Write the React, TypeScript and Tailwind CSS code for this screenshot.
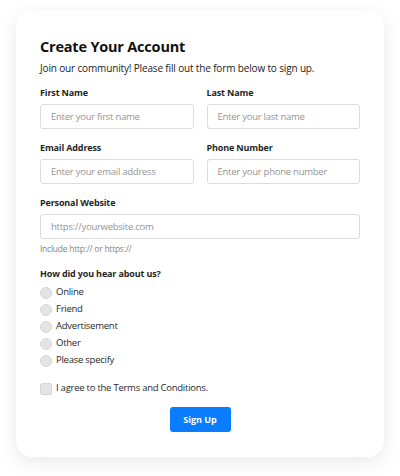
const fieldLabel = "block text-[9px] tracking-[-0.15px] leading-[15px] font-bold text-[#1f1f1f] mb-[4px]";
const fieldInput =
  "block w-full h-[25px] px-[10px] rounded-[3px] border border-[#dcdcdc] bg-white text-[9.5px] tracking-[-0.25px] text-[#333] placeholder:text-[#959595] outline-none";

const sources = ["Online", "Friend", "Advertisement", "Other", "Please specify"];

export default function App() {
  return (
    <div
      className="min-h-[476px] bg-white px-4 pt-[11px]"
      style={{ fontFamily: '"Open Sans", "Noto Sans", sans-serif' }}
    >
      <form
        className="bg-white rounded-[16px] shadow-[0_5px_20px_rgba(0,0,0,0.09)] px-6 pt-6 pb-[25px] text-[#222]"
        onSubmit={(e) => e.preventDefault()}
      >
        <h1 className="text-[14.5px] tracking-[-0.2px] leading-[24px] font-bold text-[#111]">
          Create Your Account
        </h1>
        <p className="text-[10px] tracking-[-0.15px] leading-[17px] text-[#222] mt-[1px]">
          Join our community! Please fill out the form below to sign up.
        </p>

        <div className="grid grid-cols-2 gap-x-[13px] mt-[8px]">
          <div>
            <label className={fieldLabel}>First Name</label>
            <input className={fieldInput} placeholder="Enter your first name" />
          </div>
          <div>
            <label className={fieldLabel}>Last Name</label>
            <input className={fieldInput} placeholder="Enter your last name" />
          </div>
        </div>

        <div className="grid grid-cols-2 gap-x-[13px] mt-[11px]">
          <div>
            <label className={fieldLabel}>Email Address</label>
            <input className={fieldInput} placeholder="Enter your email address" />
          </div>
          <div>
            <label className={fieldLabel}>Phone Number</label>
            <input className={fieldInput} placeholder="Enter your phone number" />
          </div>
        </div>

        <div className="mt-[11px]">
          <label className={fieldLabel}>Personal Website</label>
          <input className={fieldInput} placeholder="https://yourwebsite.com" />
          <p className="text-[8.5px] tracking-[-0.25px] leading-[13px] text-[#858585] mt-[3px]">
            Include http:// or https://
          </p>
        </div>

        <div className="mt-[11px]">
          <div className="text-[9px] tracking-[-0.15px] leading-[15px] font-bold text-[#1f1f1f]">
            How did you hear about us?
          </div>
          <div className="mt-[3px] flex flex-col">
            {sources.map((s) => (
              <label
                key={s}
                className="flex items-center h-[17px] gap-[4px] text-[9.5px] tracking-[-0.25px] text-[#2a2a2a]"
              >
                <span className="w-[12px] h-[12px] rounded-full bg-[#e4e4e4] border border-[#d6d6d6]" />
                {s}
              </label>
            ))}
          </div>
        </div>

        <label className="mt-[11px] flex items-center h-[17px] gap-[4px] text-[9.5px] tracking-[-0.25px] text-[#2a2a2a]">
          <span className="w-[12px] h-[12px] rounded-[2px] bg-[#e4e4e4] border border-[#d6d6d6]" />
          I agree to the Terms and Conditions.
        </label>

        <div className="flex justify-center mt-[10px]">
          <button
            type="submit"
            className="w-[61px] h-[25px] rounded-[3px] bg-[#0a7cff] text-white text-[9px] font-bold"
          >
            Sign Up
          </button>
        </div>
      </form>
    </div>
  );
}
